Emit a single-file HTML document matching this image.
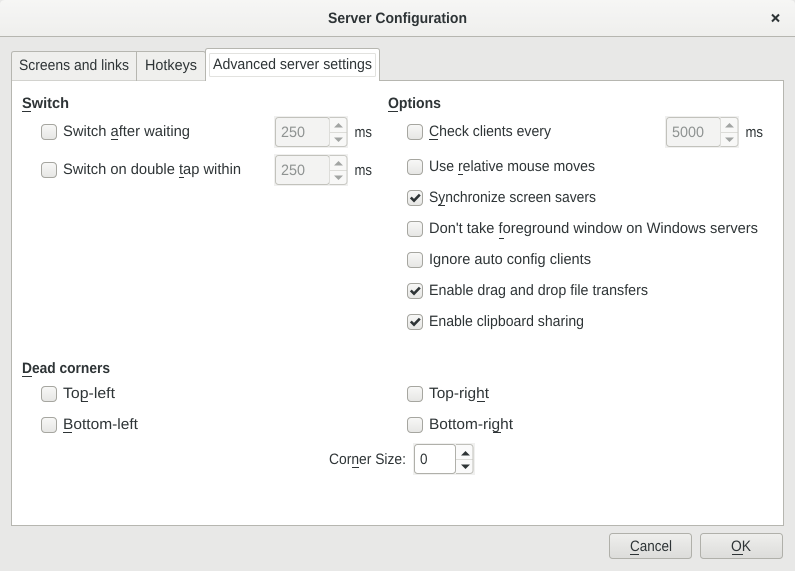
<!DOCTYPE html>
<html>
<head>
<meta charset="utf-8">
<style>
html,body{margin:0;padding:0;background:#e8e8e7;width:795px;height:571px;overflow:hidden}
svg{display:block}
text{font-family:"Liberation Sans",sans-serif;font-size:15px;fill:#2e3436;text-rendering:geometricPrecision}
.b{font-weight:bold}
.d{fill:#8f9392}
</style>
</head>
<body>
<svg width="795" height="571" viewBox="0 0 795 571" xmlns="http://www.w3.org/2000/svg">
<defs>
<linearGradient id="tb" x1="0" y1="0" x2="0" y2="1"><stop offset="0" stop-color="#f6f6f5"/><stop offset="1" stop-color="#efefed"/></linearGradient>
<linearGradient id="cb" x1="0" y1="0" x2="0" y2="1"><stop offset="0" stop-color="#f8f8f7"/><stop offset="1" stop-color="#e6e6e4"/></linearGradient>
<linearGradient id="bt" x1="0" y1="0" x2="0" y2="1"><stop offset="0" stop-color="#efefed"/><stop offset="1" stop-color="#dcdcda"/></linearGradient>
<g id="c"><rect x=".5" y=".5" width="15" height="15" rx="3.500" fill="url(#cb)" stroke="#a6a6a0"/></g>
<g id="k"><use href="#c"/><path d="M3.800 7.500 L7 10.700 L12.800 4.600" fill="none" stroke="#2e3436" stroke-width="2.600"/></g>
<g id="s">
<rect x="-1" y="-1" width="74" height="32" fill="#f0f0ef"/>
<rect x=".5" y=".5" width="54" height="29" rx="3" fill="#f3f3f2" stroke="#c2c2bc"/>
<path d="M54.5 .5 H69 a3 3 0 0 1 3 3 V26.5 a3 3 0 0 1 -3 3 H54.5" fill="#f8f8f7" stroke="#c8c8c3"/>
<path d="M55 15.5 H71.5" stroke="#dcdcd8"/>
<path d="M59 10.500 L63.500 6 L68 10.500 Z M59 20.500 L68 20.500 L63.500 25 Z" fill="#a2a5a3"/>
</g>
</defs>

<!-- title bar -->
<path d="M0 36 V5 Q0 0 5 0 H790 Q795 0 795 5 V36 Z" fill="url(#tb)"/>
<rect x="0" y="36" width="795" height="1" fill="#b6b6b0"/>
<text class="b" x="328" y="23" textLength="139" lengthAdjust="spacingAndGlyphs">Server Configuration</text>
<path d="M772 14.5 L779 21.5 M779 14.5 L772 21.5" stroke="#2e3436" stroke-width="2"/>

<!-- panel -->
<rect x="11.5" y="80.5" width="772" height="445" fill="#fff" stroke="#b6b6b0"/>

<!-- tabs -->
<path d="M11.5 80.5 V54 Q11.5 51.5 14 51.5 H136.5 V80.5" fill="#efefed" stroke="#b6b6b0"/>
<path d="M136.5 80.5 V51.5 H203 Q205.500 51.500 205.500 54 V80.500" fill="#efefed" stroke="#b6b6b0"/>
<path d="M205.5 81 V51 Q205.500 48.500 208 48.500 H377 Q379.500 48.500 379.500 51 V81" fill="#fff" stroke="#b6b6b0"/>
<rect x="206" y="80" width="173" height="1" fill="#fff"/>
<rect x="209.500" y="53.500" width="166" height="23" rx="1" fill="none" stroke="#e2e2df"/>
<text x="19" y="70" textLength="110" lengthAdjust="spacingAndGlyphs">Screens and links</text>
<text x="145" y="70" textLength="52" lengthAdjust="spacingAndGlyphs">Hotkeys</text>
<text x="213" y="69" textLength="159" lengthAdjust="spacingAndGlyphs">Advanced server settings</text>

<!-- Switch -->
<text class="b" x="22" y="108" textLength="47" lengthAdjust="spacingAndGlyphs">Switch</text>
<rect x="22" y="111" width="9" height="1" fill="#2e3436"/>
<use href="#c" x="41" y="124"/>
<text x="63" y="136" textLength="127" lengthAdjust="spacingAndGlyphs">Switch after waiting</text>
<rect x="111" y="139" width="7" height="1" fill="#2e3436"/>
<use href="#s" x="275" y="117"/>
<text class="d" x="281" y="137" textLength="24" lengthAdjust="spacingAndGlyphs">250</text>
<text x="354.500" y="137" textLength="17.500" lengthAdjust="spacingAndGlyphs">ms</text>

<use href="#c" x="41" y="162"/>
<text x="63" y="174" textLength="178" lengthAdjust="spacingAndGlyphs">Switch on double tap within</text>
<rect x="179" y="177" width="5" height="1" fill="#2e3436"/>
<use href="#s" x="275" y="155"/>
<text class="d" x="281" y="175" textLength="24" lengthAdjust="spacingAndGlyphs">250</text>
<text x="354.500" y="175" textLength="17.500" lengthAdjust="spacingAndGlyphs">ms</text>

<!-- Options -->
<text class="b" x="388" y="108" textLength="53" lengthAdjust="spacingAndGlyphs">Options</text>
<rect x="388" y="111" width="10" height="1" fill="#2e3436"/>
<use href="#c" x="407" y="124"/>
<text x="429" y="136" textLength="122" lengthAdjust="spacingAndGlyphs">Check clients every</text>
<rect x="429" y="139" width="9" height="1" fill="#2e3436"/>
<use href="#s" x="666" y="117"/>
<text class="d" x="672" y="137" textLength="32" lengthAdjust="spacingAndGlyphs">5000</text>
<text x="745.500" y="137" textLength="17.500" lengthAdjust="spacingAndGlyphs">ms</text>

<use href="#c" x="407" y="159"/>
<text x="429" y="171" textLength="166" lengthAdjust="spacingAndGlyphs">Use relative mouse moves</text>
<rect x="458" y="174" width="5" height="1" fill="#2e3436"/>

<use href="#k" x="407" y="190"/>
<text x="429" y="202" textLength="167" lengthAdjust="spacingAndGlyphs">Synchronize screen savers</text>
<rect x="438" y="205" width="7" height="1" fill="#2e3436"/>

<use href="#c" x="407" y="221"/>
<text x="429" y="233" textLength="329" lengthAdjust="spacingAndGlyphs">Don't take foreground window on Windows servers</text>
<rect x="499" y="238" width="5" height="1" fill="#2e3436"/>

<use href="#c" x="407" y="252"/>
<text x="429" y="264" textLength="162" lengthAdjust="spacingAndGlyphs">Ignore auto config clients</text>

<use href="#k" x="407" y="283"/>
<text x="429" y="295" textLength="219" lengthAdjust="spacingAndGlyphs">Enable drag and drop file transfers</text>

<use href="#k" x="407" y="314"/>
<text x="429" y="326" textLength="155" lengthAdjust="spacingAndGlyphs">Enable clipboard sharing</text>

<!-- Dead corners -->
<text class="b" x="22" y="373" textLength="88" lengthAdjust="spacingAndGlyphs">Dead corners</text>
<rect x="22" y="376" width="10" height="1" fill="#2e3436"/>
<use href="#c" x="41" y="386"/>
<text x="63" y="398" textLength="52" lengthAdjust="spacingAndGlyphs">Top-left</text>
<rect x="81" y="401" width="7" height="1" fill="#2e3436"/>
<use href="#c" x="41" y="417"/>
<text x="63" y="429" textLength="75" lengthAdjust="spacingAndGlyphs">Bottom-left</text>
<rect x="63" y="432" width="9" height="1" fill="#2e3436"/>
<use href="#c" x="407" y="386"/>
<text x="429" y="398" textLength="60" lengthAdjust="spacingAndGlyphs">Top-right</text>
<rect x="477" y="401" width="8" height="1" fill="#2e3436"/>
<use href="#c" x="407" y="417"/>
<text x="429" y="429" textLength="84" lengthAdjust="spacingAndGlyphs">Bottom-right</text>
<rect x="493" y="432" width="8" height="1" fill="#2e3436"/>

<!-- Corner size -->
<text x="329" y="464" textLength="77" lengthAdjust="spacingAndGlyphs">Corner Size:</text>
<rect x="352" y="467" width="7" height="1" fill="#2e3436"/>
<rect x="413" y="443" width="62" height="32" fill="#f0f0ef"/>
<rect x="414.500" y="444.500" width="41" height="29" rx="3" fill="#fff" stroke="#b0b0aa"/>
<path d="M456 444.500 H470 a3 3 0 0 1 3 3 V470.500 a3 3 0 0 1 -3 3 H456" fill="#fafafa" stroke="#c0c0ba"/>
<path d="M456 459.500 H472.500" stroke="#dcdcd8"/>
<path d="M461 455.500 L465.500 451 L470 455.500 Z M461 464.500 L470 464.500 L465.500 469 Z" fill="#2e3436"/>
<text x="420" y="464" textLength="7.500" lengthAdjust="spacingAndGlyphs">0</text>

<!-- Buttons -->
<rect x="609.500" y="533.500" width="82" height="25" rx="3" fill="url(#bt)" stroke="#b0b0aa"/>
<text x="630" y="551" textLength="42" lengthAdjust="spacingAndGlyphs">Cancel</text>
<rect x="630" y="554" width="9" height="1" fill="#2e3436"/>
<rect x="700.500" y="533.500" width="82" height="25" rx="3" fill="url(#bt)" stroke="#b0b0aa"/>
<text x="731" y="551" textLength="20" lengthAdjust="spacingAndGlyphs">OK</text>
<rect x="732" y="554" width="11" height="1" fill="#2e3436"/>
</svg>
</body>
</html>
